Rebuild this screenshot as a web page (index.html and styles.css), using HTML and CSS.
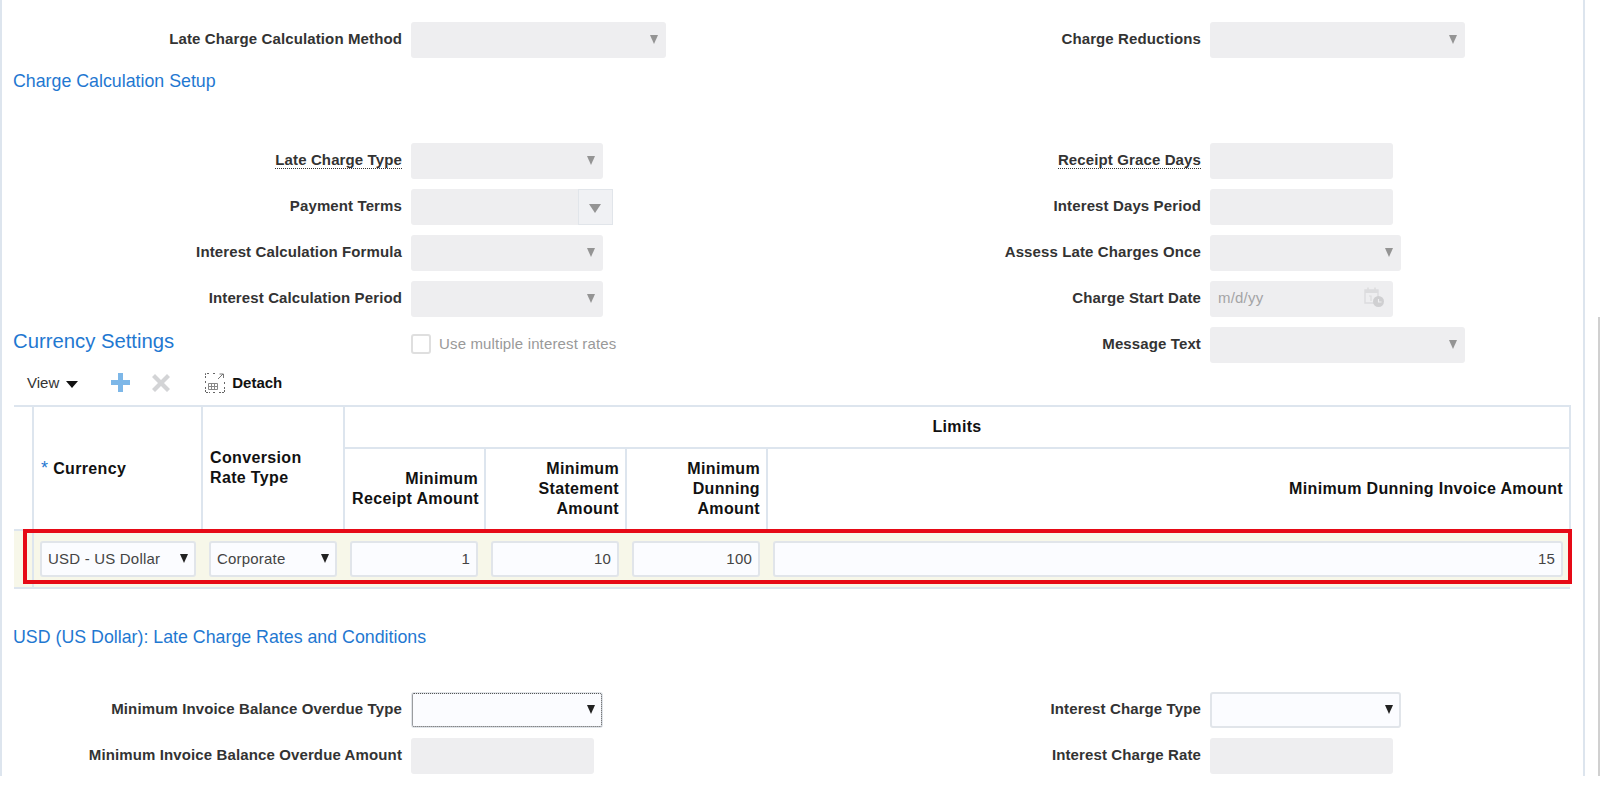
FILE: index.html
```html
<!DOCTYPE html>
<html lang="en">
<head>
    <meta charset="UTF-8">
    <title>Late Charge Setup</title>
    <link rel="stylesheet" href="styles.css">
</head>
<body>
    <div class="panel">
        <div class="form form-top">
            <div class="field">
                <span class="label">Late Charge Calculation Method</span>
                <div class="box w-255 off"><i class="arrow"></i></div>
            </div>
            <div class="field">
                <span class="label">Charge Reductions</span>
                <div class="box w-255 off"><i class="arrow"></i></div>
            </div>
        </div>

        <h2 class="heading first">Charge Calculation Setup</h2>

        <div class="form form-setup">
            <div class="field">
                <span class="label"><span class="hint">Late Charge Type</span></span>
                <div class="box w-192 off"><i class="arrow"></i></div>
            </div>
            <div class="field">
                <span class="label"><span class="hint">Receipt Grace Days</span></span>
                <div class="box w-183 off"></div>
            </div>
            <div class="field">
                <span class="label">Payment Terms</span>
                <div class="box w-167 off"></div>
                <div class="combo-btn"><i class="arrow big"></i></div>
            </div>
            <div class="field">
                <span class="label">Interest Days Period</span>
                <div class="box w-183 off"></div>
            </div>
            <div class="field">
                <span class="label">Interest Calculation Formula</span>
                <div class="box w-192 off"><i class="arrow"></i></div>
            </div>
            <div class="field">
                <span class="label">Assess Late Charges Once</span>
                <div class="box w-191 off"><i class="arrow"></i></div>
            </div>
            <div class="field">
                <span class="label">Interest Calculation Period</span>
                <div class="box w-192 off"><i class="arrow"></i></div>
            </div>
            <div class="field">
                <span class="label">Charge Start Date</span>
                <div class="box w-183 off date">
                    <span class="placeholder">m/d/yy</span>
                    <svg class="cal" width="22" height="22" viewBox="0 0 22 22">
                        <path d="M2 4h13v13H2z" fill="none" stroke="#dcdcde" stroke-width="1.4"/>
                        <path d="M2 4h13v3H2z" fill="#dcdcde"/>
                        <path d="M5 1.500v3M12 1.500v3" stroke="#dcdcde" stroke-width="1.600"/>
                        <path d="M6 10h2v5" fill="none" stroke="#dcdcde" stroke-width="1.200"/>
                        <circle cx="15.500" cy="15.500" r="5.500" fill="#cfcfd1"/>
                        <path d="M15.500 13v3h3" fill="none" stroke="#eeeef0" stroke-width="1.100"/>
                    </svg>
                </div>
            </div>
            <div class="field">
                <h2 class="heading large">Currency Settings</h2>
                <label class="check"><i class="checkbox"></i>Use multiple interest rates</label>
            </div>
            <div class="field">
                <span class="label">Message Text</span>
                <div class="box w-255 off"><i class="arrow"></i></div>
            </div>
        </div>

        <div class="toolbar">
            <span class="view">View</span>
            <i class="view-arrow"></i>
            <svg class="tool-plus" width="19" height="19" viewBox="0 0 19 19"><path d="M7 0h5v7h7v5h-7v7H7v-7H0V7h7z" fill="#7db7e8"/></svg>
            <svg class="tool-x" width="18" height="18" viewBox="0 0 18 18"><path d="M3 0l6 6 6-6 3 3-6 6 6 6-3 3-6-6-6 6-3-3 6-6-6-6z" fill="#d3d4d6"/></svg>
            <svg class="tool-detach" width="20" height="20" viewBox="0 0 20 20">
                <path d="M.5 5V.5H5M8 .5h3M.5 8v3M.5 14v5.500H5M8 19.500h3M14 19.500h5.500V14M19.500 11V9" fill="none" stroke="#666" stroke-width="1" stroke-dasharray="2 1"/>
                <path d="M13 6l5-5M14.500 1H18.500V5" fill="none" stroke="#777" stroke-width="1"/>
                <path d="M3.500 10.500h9v6h-9zM3.500 13.500h9M6.500 10.500v6M9.500 10.500v6" fill="none" stroke="#888" stroke-width="1"/>
            </svg>
            <span class="detach">Detach</span>
        </div>

        <div class="table-wrap">
            <table class="grid">
                <colgroup>
                    <col class="c-gutter"><col class="c-currency"><col class="c-rate">
                    <col class="c-min"><col class="c-min"><col class="c-min"><col>
                </colgroup>
                <thead>
                    <tr class="head-top">
                        <th rowspan="2"></th>
                        <th rowspan="2" class="left"><span class="req">*</span> Currency</th>
                        <th rowspan="2" class="left">Conversion<br>Rate Type</th>
                        <th colspan="4" class="center">Limits</th>
                    </tr>
                    <tr class="head-sub">
                        <th>Minimum<br>Receipt Amount</th>
                        <th>Minimum<br>Statement<br>Amount</th>
                        <th>Minimum<br>Dunning<br>Amount</th>
                        <th>Minimum Dunning Invoice Amount</th>
                    </tr>
                </thead>
                <tbody>
                    <tr>
                        <td></td>
                        <td><div class="box on"><span>USD - US Dollar</span><i class="arrow dark"></i></div></td>
                        <td><div class="box on"><span>Corporate</span><i class="arrow dark"></i></div></td>
                        <td><div class="box on num">1</div></td>
                        <td><div class="box on num">10</div></td>
                        <td><div class="box on num">100</div></td>
                        <td><div class="box on num">15</div></td>
                    </tr>
                </tbody>
            </table>
            <div class="highlight"></div>
        </div>

        <h2 class="heading rates">USD (US Dollar): Late Charge Rates and Conditions</h2>

        <div class="form form-rates">
            <div class="field">
                <span class="label">Minimum Invoice Balance Overdue Type</span>
                <div class="box w-192 on focus"><i class="arrow dark"></i></div>
            </div>
            <div class="field">
                <span class="label">Interest Charge Type</span>
                <div class="box w-191 on"><i class="arrow dark"></i></div>
            </div>
            <div class="field">
                <span class="label">Minimum Invoice Balance Overdue Amount</span>
                <div class="box w-183 off"></div>
            </div>
            <div class="field">
                <span class="label">Interest Charge Rate</span>
                <div class="box w-183 off"></div>
            </div>
        </div>
    </div>
    <div class="page-scroll"></div>
</body>
</html>
```

FILE: styles.css
```css
body {
    font-family: "Liberation Sans", Arial, sans-serif;
    margin: 0;
    padding: 0;
    background-color: #fff;
    color: #333;
    overflow: hidden;
}

.panel {
    width: 1585px;
    height: 776px;
    padding-top: 22px;
    border-left: 2px solid #dde5ee;
    border-right: 2px solid #dde5ee;
    overflow: hidden;
    box-sizing: border-box;
}

.page-scroll {
    position: absolute;
    top: 317px;
    right: 0;
    width: 2px;
    height: 459px;
    background-color: #d0d0d0;
}

.form {
    display: grid;
    grid-template-columns: 809px 1fr;
    row-gap: 10px;
}

.field {
    display: flex;
    align-items: center;
    height: 36px;
}

.label {
    width: 400px;
    flex: none;
    padding-right: 9px;
    padding-bottom: 4px;
    text-align: right;
    font-size: 15px;
    font-weight: bold;
    letter-spacing: 0.12px;
    white-space: nowrap;
}

.form .field:nth-child(2n) .label {
    width: 390px;
}

.hint {
    border-bottom: 1px dotted #333;
}

.box {
    position: relative;
    height: 36px;
    box-sizing: border-box;
    border-radius: 3px;
    flex: none;
}

.off {
    background-color: #eeeef0;
}

.on {
    background-color: #fbfcff;
    border: 2px solid #e1e5ea;
    font-size: 15px;
    letter-spacing: 0.2px;
    display: flex;
    align-items: center;
    padding-left: 6px;
    padding-bottom: 2px;
    color: #444;
}

.focus {
    outline: 1px dotted #555;
    outline-offset: -2px;
}

.num {
    justify-content: flex-end;
    padding-left: 0;
    padding-right: 6px;
}

.w-255 { width: 255px; }
.w-192 { width: 192px; }
.w-191 { width: 191px; }
.w-183 { width: 183px; }
.w-167 { width: 167px; border-radius: 3px 0 0 3px; }

.arrow {
    position: absolute;
    right: 8px;
    top: 13px;
    width: 0;
    height: 0;
    border-left: 4px solid transparent;
    border-right: 4px solid transparent;
    border-top: 9px solid #949494;
}

.arrow.dark {
    border-top-color: #222;
    right: 6.5px;
    top: 11px;
}

.arrow.big {
    right: 11px;
    top: 14px;
    border-left-width: 6px;
    border-right-width: 6px;
    border-top-width: 9px;
}

.combo-btn {
    position: relative;
    width: 35px;
    height: 36px;
    box-sizing: border-box;
    background-color: #f0f1f4;
    border: 1px solid #e1e5ea;
    flex: none;
}

.date {
    display: flex;
    align-items: center;
    justify-content: space-between;
    padding: 0 8px 4px;
}

.placeholder {
    font-size: 15px;
    letter-spacing: 0.2px;
    color: #a4a4a6;
}

.heading {
    margin: 0;
    padding-left: 11px;
    font-size: 17.8px;
    font-weight: normal;
    color: #1f78d1;
}

.heading.first {
    margin-top: 13px;
    height: 72px;
}

.heading.large {
    width: 409px;
    flex: none;
    box-sizing: border-box;
    font-size: 20.3px;
    padding-bottom: 8px;
}

.heading.rates {
    margin-top: 38px;
    height: 65px;
}

.check {
    display: flex;
    align-items: center;
    font-size: 15px;
    letter-spacing: 0.15px;
    color: #999;
    padding-bottom: 3px;
}

.checkbox {
    width: 20px;
    height: 20px;
    box-sizing: border-box;
    border: 2px solid #dfdfdf;
    border-radius: 3px;
    margin-right: 8px;
}

.toolbar {
    display: flex;
    align-items: center;
    height: 39px;
    padding-bottom: 3px;
    padding-left: 25px;
}

.view {
    font-size: 15px;
}

.view-arrow {
    width: 0;
    height: 0;
    margin: 4px 0 0 7px;
    border-left: 6px solid transparent;
    border-right: 6px solid transparent;
    border-top: 7px solid #111;
}

.tool-plus {
    margin-left: 33px;
}

.tool-x {
    margin-left: 22px;
}

.tool-detach {
    margin-left: 35px;
}

.detach {
    margin-left: 7px;
    font-size: 15px;
    font-weight: bold;
    color: #111;
}

.table-wrap {
    position: relative;
    margin-left: 12px;
    width: 1557px;
}

.grid {
    border-collapse: collapse;
    table-layout: fixed;
    width: 100%;
    border-top: 2px solid #dde5ee;
    border-bottom: 2px solid #dde5ee;
}

.c-gutter { width: 19px; }
.c-currency { width: 169px; }
.c-rate { width: 142px; }
.c-min { width: 141px; }

.grid th {
    font-size: 16px;
    line-height: 20px;
    letter-spacing: 0.35px;
    color: #111;
    text-align: right;
    padding: 0 7px;
    white-space: nowrap;
    border-right: 2px solid #dde5ee;
    border-bottom: 2px solid #dde5ee;
}

.head-sub th {
    padding-right: 6px;
}

.grid th.left {
    text-align: left;
}

.grid th.center {
    text-align: center;
}

.head-top {
    height: 42px;
}

.head-sub {
    height: 82px;
}

.req {
    color: #1f78d1;
    font-size: 18px;
    font-weight: normal;
}

.grid td {
    height: 58px;
    padding: 0 7px 0 6px;
    background-color: #f7f7e9;
    box-sizing: border-box;
}

.grid td:first-child {
    border-right: 2px solid #dde5ee;
}

.grid td:nth-child(2) {
    padding: 0 6px;
}

.grid td:nth-child(3) {
    padding: 0 7px;
}

.highlight {
    position: absolute;
    left: 9px;
    right: -1px;
    bottom: 5px;
    height: 55px;
    box-sizing: border-box;
    border: 4px solid #e60a16;
    pointer-events: none;
}
```
